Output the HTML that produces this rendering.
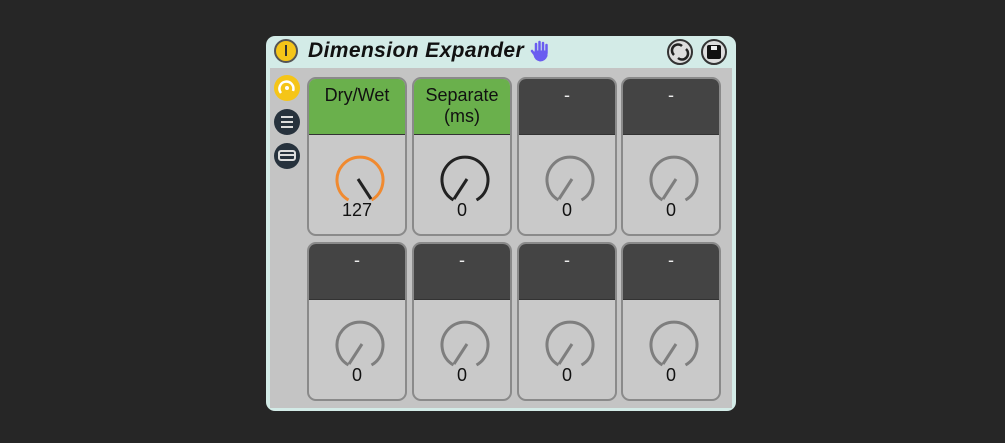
<!DOCTYPE html><html><head><style>
body{margin:0;background:#262626;width:1005px;height:443px;overflow:hidden;font-family:"Liberation Sans",sans-serif;position:relative}
#p{position:absolute;left:266px;top:36px;width:470px;height:375px;background:#d3ebe7;border-radius:9px}
#in{position:absolute;left:4px;top:32px;width:462px;height:340px;background:#c4c4c4}
.t{position:absolute;left:42px;top:3px;font-size:21px;letter-spacing:0.4px;font-weight:bold;font-style:italic;color:#111}
.c{position:absolute;width:96px;height:155px;border:2px solid #8a8a8a;border-radius:9px;background:#c9c9c9;overflow:hidden;box-sizing:content-box}
.h{height:56px;background:#444;color:#eee;text-align:center;font-size:18px;line-height:21px;padding-top:6px;box-sizing:border-box;border-bottom:1px solid #333}
.g{background:#6ab04c;color:#111}
.v{position:absolute;left:0;width:96px;top:121px;text-align:center;font-size:18px;color:#111}
svg.k{position:absolute;left:22px;top:70px}
</style></head><body>
<div id="p"><div id="in"></div>
<svg style="position:absolute;left:0;top:0" width="470" height="140">
<circle cx="20" cy="15" r="11" fill="#f5c518" stroke="#555" stroke-width="2"/><line x1="20" y1="9" x2="20" y2="20" stroke="#333" stroke-width="2"/>
<circle cx="21" cy="52" r="13" fill="#f5c518"/><path d="M15 57 A7 7 0 1 1 27 55" fill="none" stroke="#fff" stroke-width="2.5"/><circle cx="21" cy="52" r="2" fill="#fff"/>
<circle cx="21" cy="86" r="13" fill="#27323d"/><g stroke="#ddd" stroke-width="2"><line x1="15" y1="81" x2="27" y2="81"/><line x1="15" y1="86" x2="27" y2="86"/><line x1="15" y1="91" x2="27" y2="91"/></g>
<circle cx="21" cy="120" r="13" fill="#27323d"/><rect x="13" y="115" width="16" height="9" rx="2" fill="none" stroke="#ddd" stroke-width="2"/><line x1="13" y1="119" x2="29" y2="119" stroke="#ddd" stroke-width="2"/>
<circle cx="414" cy="16" r="12" fill="#ddd" stroke="#333" stroke-width="2"/><path d="M408 19 A6 6 0 0 1 416 10 M420 13 A6 6 0 0 1 412 22" fill="none" stroke="#222" stroke-width="2.5"/>
<circle cx="448" cy="16" r="12" fill="#ddd" stroke="#333" stroke-width="2"/><rect x="441" y="9" width="14" height="14" rx="2" fill="#111"/><rect x="445" y="10" width="6" height="4" fill="#eee"/>
<g fill="#6a5cf0" stroke="#6a5cf0" stroke-linecap="round">
<line x1="270" y1="8" x2="270" y2="16" stroke-width="2.5"/><line x1="273.5" y1="6" x2="273.5" y2="16" stroke-width="2.5"/><line x1="277" y1="7" x2="277" y2="16" stroke-width="2.5"/><line x1="280.5" y1="9" x2="280.5" y2="17" stroke-width="2.5"/><line x1="266" y1="15" x2="269" y2="19" stroke-width="2.5"/>
<path d="M269 15 H281 V20 Q279 25 274 25 Q269 24 268 19 Z" stroke-width="1"/></g>
</svg>
<div class="t">Dimension Expander</div>
</div>
<div id="cells"></div>
<script>
var xs=[307,412,517,621],ys=[77,242],h='';
var data=[["Dry/Wet","127",1],["Separate<br>(ms)","0",2]];
for(var r=0;r<2;r++)for(var c=0;c<4;c++){var i=r*4+c,d=data[i]||["-","0",0];
var col=d[2]==1?"#f08a30":d[2]==2?"#222":"#7e7e7e";
var cx=29,cy=31,R=23,px=d[2]==1?cx+11:cx-11,py=cy+19;
h+='<div class="c" style="left:'+xs[c]+'px;top:'+ys[r]+'px"><div class="h'+(d[2]?' g':'')+'">'+d[0]+'</div>'+
'<svg class="k" width="58" height="56"><path d="M'+(cx-11.5)+' '+(cy+20)+' A'+R+' '+R+' 0 1 1 '+(cx+11.5)+' '+(cy+20)+'" fill="none" stroke="'+col+'" stroke-width="3"/><line x1="'+(cx+(d[2]==1?-2:2))+'" y1="'+(cy-1)+'" x2="'+px+'" y2="'+py+'" stroke="'+(d[2]==1?'#222':col)+'" stroke-width="3"/></svg>'+
'<div class="v">'+d[1]+'</div></div>';}
document.getElementById('cells').innerHTML=h;
</script>
</body></html>
